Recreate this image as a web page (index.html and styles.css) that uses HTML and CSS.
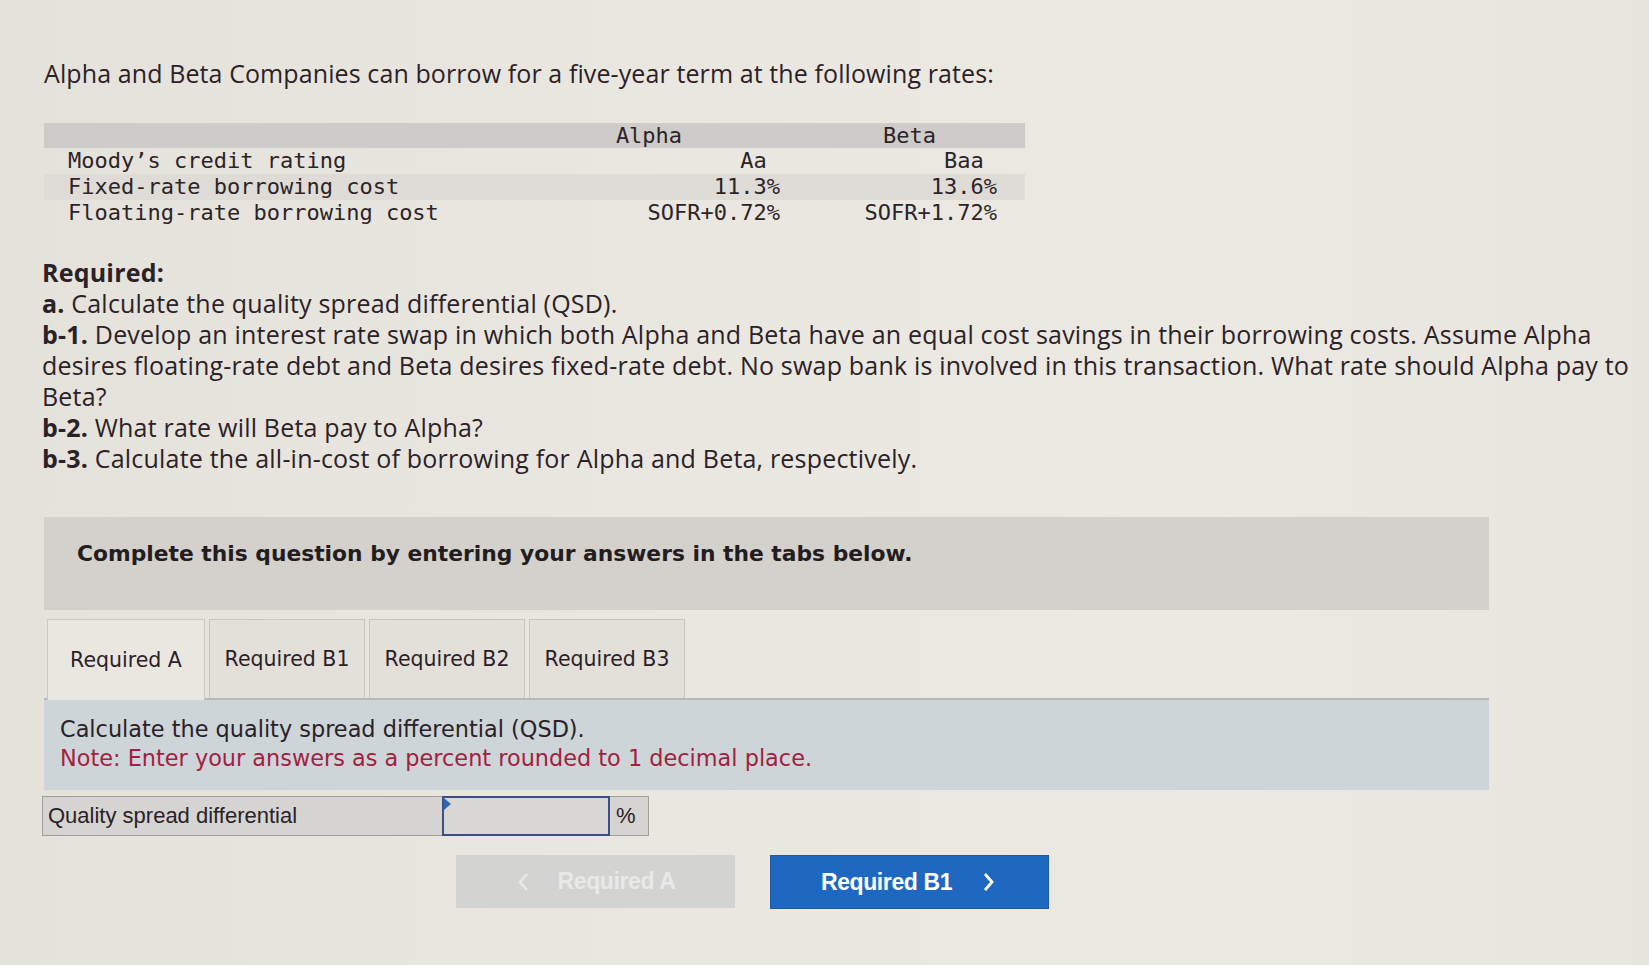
FILE: index.html
```html
<!DOCTYPE html>
<html>
<head>
<meta charset="utf-8">
<link rel="stylesheet" href="styles.css">
</head>
<body>
<div class="page">
  <p class="intro">Alpha and Beta Companies can borrow for a five-year term at the following rates:</p>

  <table class="rates">
    <colgroup><col class="c-label"><col class="c-alpha"><col class="c-beta"></colgroup>
    <thead>
      <tr><th></th><th class="h-alpha">Alpha</th><th class="h-beta">Beta</th></tr>
    </thead>
    <tbody>
      <tr><td class="lbl">Moody’s credit rating</td><td class="va">Aa&nbsp;</td><td class="vb">Baa&nbsp;</td></tr>
      <tr class="stripe"><td class="lbl">Fixed-rate borrowing cost</td><td class="va">11.3%</td><td class="vb">13.6%</td></tr>
      <tr><td class="lbl">Floating-rate borrowing cost</td><td class="va">SOFR+0.72%</td><td class="vb">SOFR+1.72%</td></tr>
    </tbody>
  </table>

  <div class="required">
    <p class="req-title">Required:</p>
    <p><b>a.</b> Calculate the quality spread differential (QSD).</p>
    <p><b>b-1.</b> Develop an interest rate swap in which both Alpha and Beta have an equal cost savings in their borrowing costs. Assume Alpha desires floating-rate debt and Beta desires fixed-rate debt. No swap bank is involved in this transaction. What rate should Alpha pay to Beta?</p>
    <p><b>b-2.</b> What rate will Beta pay to Alpha?</p>
    <p><b>b-3.</b> Calculate the all-in-cost of borrowing for Alpha and Beta, respectively.</p>
  </div>

  <div class="complete">Complete this question by entering your answers in the tabs below.</div>

  <div class="tabs">
    <div class="tab active">Required A</div>
    <div class="tab">Required B1</div>
    <div class="tab">Required B2</div>
    <div class="tab">Required B3</div>
  </div>

  <div class="panel">
    <p>Calculate the quality spread differential (QSD).</p>
    <p class="note">Note: Enter your answers as a percent rounded to 1 decimal place.</p>
  </div>

  <div class="answer">
    <div class="a-label">Quality spread differential</div>
    <div class="a-input"><span class="flag"></span></div>
    <div class="a-unit">%</div>
  </div>

  <div class="nav">
    <div class="btn prev">
      <svg width="14" height="22" viewBox="0 0 14 22"><polyline points="11,3 4,11 11,19" fill="none" stroke="currentColor" stroke-width="2.4"/></svg>
      <span>Required A</span>
    </div>
    <div class="btn next">
      <span>Required B1</span>
      <svg width="14" height="22" viewBox="0 0 14 22"><polyline points="3,3 10,11 3,19" fill="none" stroke="currentColor" stroke-width="2.8"/></svg>
    </div>
  </div>
</div>
</body>
</html>
```

FILE: styles.css
```css
html, body {
  margin: 0;
  padding: 0;
}
body {
  width: 1649px;
  height: 965px;
  overflow: hidden;
  background: linear-gradient(90deg, #e5e2db 0%, #eae7e0 40%, #ece8e2 75%, #e8e5de 100%);
  color: #2b2228;
  font-family: "Open Sans", "Liberation Sans", sans-serif;
}
.page {
  padding: 57px 0 0 42px;
}
p { margin: 0; }

.intro {
  font-size: 25px;
  line-height: 32px;
  padding-left: 2px;
  letter-spacing: 0.1px;
}

.rates {
  margin-top: 34px;
  margin-left: 2px;
  border-collapse: collapse;
  font-family: "DejaVu Sans Mono", monospace;
  font-size: 22px;
  color: #2c2428;
}
.c-label { width: 474px; }
.c-alpha { width: 284px; }
.c-beta { width: 223px; }
.rates th {
  background: #cecbc8;
  font-weight: normal;
  height: 25px;
  padding: 0;
  line-height: 25px;
}
.rates .h-alpha { text-align: center; padding-right: 22px; }
.rates .h-beta { text-align: center; padding-left: 20px; padding-right: 28px; }
.rates td {
  height: 26px;
  line-height: 26px;
  padding: 0;
  white-space: pre;
}
.rates .lbl { padding-left: 24px; }
.rates .va { text-align: right; padding-right: 22px; }
.rates .vb { text-align: right; padding-right: 28px; }
.rates .stripe td { background: #dfdcd7; }

.required {
  margin-top: 31px;
  width: 1600px;
  font-size: 25px;
  line-height: 31px;
  letter-spacing: 0.2px;
}
.required .req-title { font-weight: bold; }
.required b { font-weight: bold; }

.complete {
  margin-top: 43px;
  margin-left: 2px;
  width: 1445px;
  height: 93px;
  box-sizing: border-box;
  background: #d4d0cb;
  padding: 24px 0 0 33px;
  font-family: "DejaVu Sans", Verdana, sans-serif;
  font-weight: bold;
  font-size: 21.8px;
  line-height: 26px;
  color: #231c20;
}

.tabs {
  margin-top: 9px;
  margin-left: 5px;
  display: flex;
  gap: 4px;
  height: 81px;
  position: relative;
  z-index: 1;
}
.tab {
  width: 156px;
  height: 79px;
  box-sizing: border-box;
  border: 1px solid #c9c6c1;
  border-bottom: none;
  background: #e3e0da;
  display: flex;
  align-items: center;
  justify-content: center;
  font-family: "DejaVu Sans", Verdana, sans-serif;
  font-size: 20.5px;
  color: #2a2228;
}
.tab.active {
  width: 158px;
  height: 81px;
  background: #eae7e1;
  border-color: #cbc8c3;
}

.panel {
  margin-top: -2px;
  margin-left: 2px;
  width: 1445px;
  height: 92px;
  box-sizing: border-box;
  border-top: 2px solid #b9b8b9;
  background: #cdd5d9;
  padding: 15px 0 0 16px;
  font-family: "DejaVu Sans", Verdana, sans-serif;
  font-size: 22.4px;
  line-height: 29px;
  color: #2a2228;
}
.panel .note { color: #a3213f; }

.answer {
  margin-top: 6px;
  display: flex;
  width: 607px;
  height: 40px;
  box-sizing: border-box;
  border: 1px solid #a19f9d;
  background: #d6d4d1;
  font-family: "Liberation Sans", Arial, sans-serif;
  font-size: 22px;
  color: #2a2228;
}
.a-label {
  width: 399px;
  padding-left: 5px;
  box-sizing: border-box;
  display: flex;
  align-items: center;
}
.a-input {
  width: 168px;
  box-sizing: border-box;
  border: 2px solid #3d4f86;
  background: #d9d7d4;
  position: relative;
  margin: -1px 0;
}
.flag {
  position: absolute;
  left: 0;
  top: 0;
  width: 0;
  height: 0;
  border-top: 6px solid transparent;
  border-bottom: 6px solid transparent;
  border-left: 7px solid #3167b0;
}
.a-unit {
  flex: 1;
  display: flex;
  align-items: center;
  padding-left: 6px;
}

.nav {
  margin-top: 19px;
  margin-left: 414px;
  display: flex;
  gap: 35px;
}
.btn {
  width: 279px;
  height: 53px;
  display: flex;
  align-items: center;
  justify-content: center;
  font-family: "Liberation Sans", Arial, sans-serif;
  font-weight: bold;
  font-size: 23px;
  letter-spacing: -0.4px;
}
.btn.prev {
  background: #d3d3d2;
  color: #e9e9e8;
  gap: 28px;
  padding-right: 0;
  box-sizing: border-box;
}
.btn.next {
  background: #1f68c2;
  color: #ffffff;
  height: 54px;
  gap: 30px;
  padding-right: 2px;
  box-sizing: border-box;
  border: 1px solid #1a5aa8;
}
```
